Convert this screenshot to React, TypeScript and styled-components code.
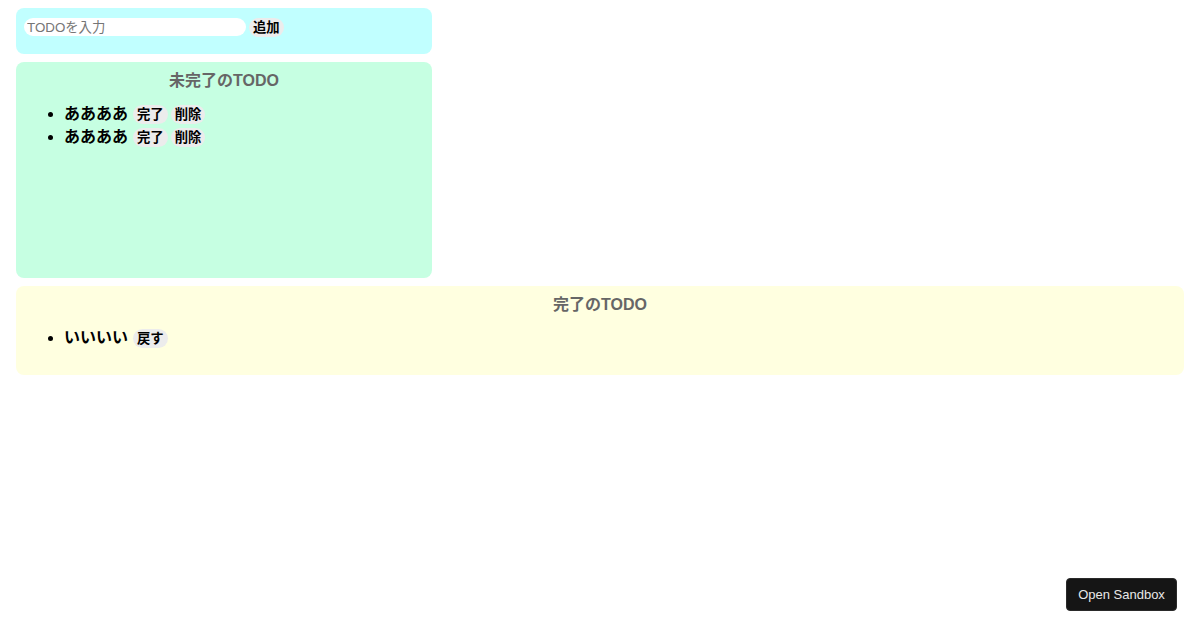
import styled, { createGlobalStyle } from "styled-components";

const GlobalStyle = createGlobalStyle`
    body {
        margin: 8px;
        font-family: "Liberation Sans", "Noto Sans CJK JP", sans-serif;
        background: #ffffff;
    }
`;

const incompleteTodos = ["ああああ", "ああああ"];
const completeTodos = ["いいいい"];

export default function App() {
    return (
        <>
            <GlobalStyle />
            <InputArea>
                <TodoInput placeholder="TODOを入力" />
                <Pill>追加</Pill>
            </InputArea>

            <IncompleteArea>
                <Title>未完了のTODO</Title>
                <List>
                    {incompleteTodos.map((todo, i) => (
                        <Row key={i}>
                            <ItemText>{todo}</ItemText>
                            <Pill>完了</Pill>
                            <Pill>削除</Pill>
                        </Row>
                    ))}
                </List>
            </IncompleteArea>

            <CompleteArea>
                <Title>完了のTODO</Title>
                <List>
                    {completeTodos.map((todo, i) => (
                        <Row key={i}>
                            <ItemText>{todo}</ItemText>
                            <Pill>戻す</Pill>
                        </Row>
                    ))}
                </List>
            </CompleteArea>

            <SandboxButton>Open Sandbox</SandboxButton>
        </>
    );
}

const Area = styled.div`
    padding: 8px;
    margin: 8px;
    border-radius: 8px;
`;

const InputArea = styled(Area)`
    background-color: #c1ffff;
    width: 400px;
    margin-top: 0;
    display: flex;
    align-items: flex-start;
    padding-top: 10px;
    height: 28px;
`;

const IncompleteArea = styled(Area)`
    background-color: #c6ffe2;
    width: 400px;
    min-height: 200px;
`;

const CompleteArea = styled(Area)`
    background-color: #ffffe0;
`;

const TodoInput = styled.input`
    border: none;
    outline: none;
    border-radius: 16px;
    width: 216px;
    height: 18px;
    padding: 0 3px;
    box-sizing: content-box;
    font-family: "Liberation Sans", "Noto Sans CJK JP", sans-serif;
    font-size: 13.33px;
    color: #000;
    &::placeholder {
        color: #757575;
    }
`;

const Pill = styled.button`
    border: none;
    border-radius: 16px;
    background-color: #ececec;
    padding: 0 4px;
    height: 19px;
    margin-left: 3px;
    font-family: "Liberation Sans", "Noto Sans CJK JP", sans-serif;
    font-size: 13.33px;
    font-weight: bold;
    color: #000;
    line-height: 19px;
    cursor: pointer;
`;

const Title = styled.p`
    text-align: center;
    margin: 0 0 12px;
    padding-top: 2px;
    font-weight: bold;
    font-size: 16px;
    line-height: 18px;
    color: #666;
`;

const List = styled.ul`
    margin: 12px 0 18px;
    padding-left: 40px;
`;

const Row = styled.li`
    line-height: 23px;
    height: 23px;
`;

const ItemText = styled.span`
    font-weight: bold;
    font-size: 16px;
    color: #000;
    margin-right: 2px;
`;

const SandboxButton = styled.button`
    position: fixed;
    right: 23px;
    bottom: 19px;
    width: 111px;
    height: 33px;
    background: #151515;
    color: #e8e8e8;
    border: 1px solid #2a2a2a;
    border-radius: 4px;
    font-family: "Liberation Sans", sans-serif;
    font-size: 13px;
`;
